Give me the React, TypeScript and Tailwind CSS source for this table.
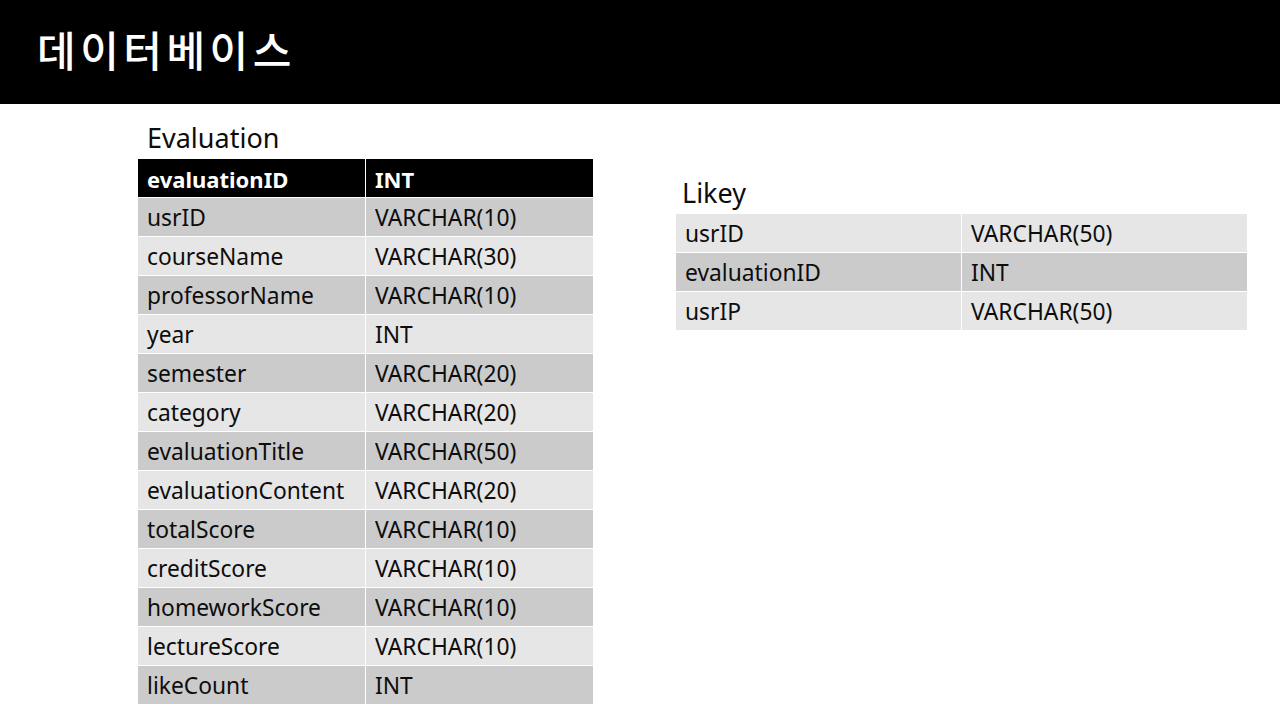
import React from 'react';

const evaluation: [string, string][] = [
    ["usrID", "VARCHAR(10)"],
    ["courseName", "VARCHAR(30)"],
    ["professorName", "VARCHAR(10)"],
    ["year", "INT"],
    ["semester", "VARCHAR(20)"],
    ["category", "VARCHAR(20)"],
    ["evaluationTitle", "VARCHAR(50)"],
    ["evaluationContent", "VARCHAR(20)"],
    ["totalScore", "VARCHAR(10)"],
    ["creditScore", "VARCHAR(10)"],
    ["homeworkScore", "VARCHAR(10)"],
    ["lectureScore", "VARCHAR(10)"],
    ["likeCount", "INT"],
];

const likey: [string, string][] = [
    ["usrID", "VARCHAR(50)"],
    ["evaluationID", "INT"],
    ["usrIP", "VARCHAR(50)"],
];

const font = { fontFamily: '"Noto Sans", "Noto Sans CJK KR", sans-serif' };

const App = () => {
    return (
        <div className="w-[1280px] h-[720px] bg-white overflow-hidden text-[#0d0d0d]" style={font}>
            <div className="h-[104px] bg-black flex items-center pl-[37px] pb-[8px]">
                <h1 className="text-white text-[42px] font-medium tracking-[4.5px]" style={{ fontFamily: '"Noto Sans CJK KR", sans-serif' }}>데이터베이스</h1>
            </div>

            <div className="flex">
                {/* Evaluation */}
                <div className="ml-[138px] w-[455px] flex flex-col">
                    <h2 className="text-[27px] leading-[34px] pl-[9px] mt-[17px] mb-[4px]">Evaluation</h2>
                    <div className="grid grid-cols-2 gap-x-px gap-y-px bg-white">
                        <div className="bg-black text-white font-bold text-[22px] h-[38px] pl-[9px] pt-[2px] flex items-center">evaluationID</div>
                        <div className="bg-black text-white font-bold text-[22px] h-[38px] pl-[9px] pt-[2px] flex items-center">INT</div>
                        {evaluation.map(([name, type], i) => (
                            <React.Fragment key={name}>
                                <div className={`${i % 2 === 0 ? 'bg-[#cbcbcb]' : 'bg-[#e6e6e6]'} text-[22.8px] h-[38px] pl-[9px] pt-[2px] flex items-center`}>{name}</div>
                                <div className={`${i % 2 === 0 ? 'bg-[#cbcbcb]' : 'bg-[#e6e6e6]'} text-[22.8px] h-[38px] pl-[9px] pt-[2px] flex items-center`}>{type}</div>
                            </React.Fragment>
                        ))}
                    </div>
                </div>

                {/* Likey */}
                <div className="ml-[83px] w-[571px] flex flex-col">
                    <h2 className="text-[27px] leading-[34px] pl-[6px] mt-[72px] mb-[4px]">Likey</h2>
                    <div className="grid grid-cols-2 gap-x-px gap-y-px bg-white">
                        {likey.map(([name, type], i) => (
                            <React.Fragment key={name}>
                                <div className={`${i % 2 === 1 ? 'bg-[#cbcbcb]' : 'bg-[#e6e6e6]'} text-[22.8px] h-[38px] pl-[9px] pt-[2px] flex items-center`}>{name}</div>
                                <div className={`${i % 2 === 1 ? 'bg-[#cbcbcb]' : 'bg-[#e6e6e6]'} text-[22.8px] h-[38px] pl-[9px] pt-[2px] flex items-center`}>{type}</div>
                            </React.Fragment>
                        ))}
                    </div>
                </div>
            </div>
        </div>
    );
};

export default App;
